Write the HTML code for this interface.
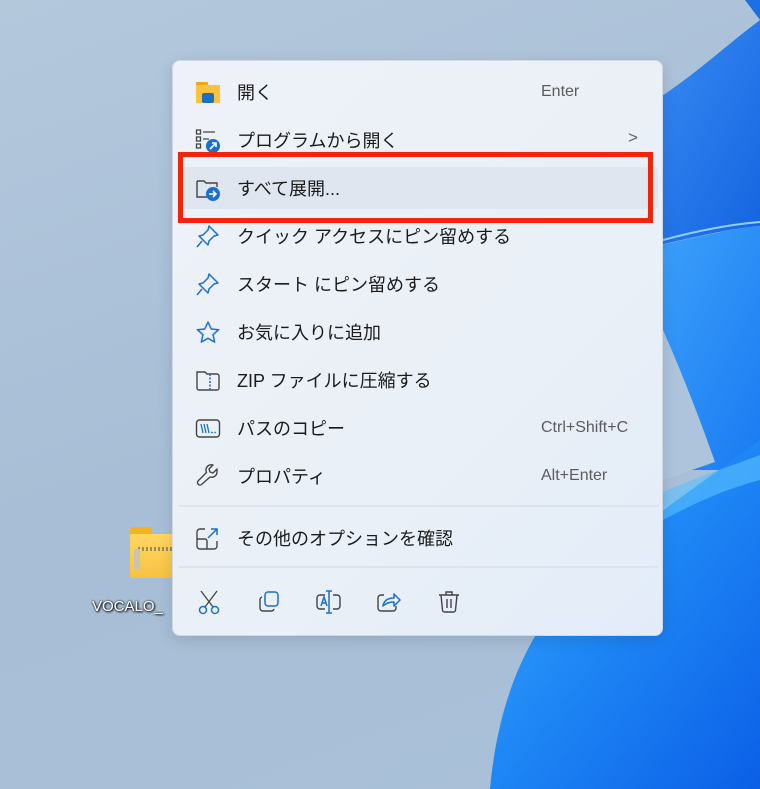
<!DOCTYPE html>
<html><head><meta charset="utf-8"><style>
*{margin:0;padding:0;box-sizing:border-box}
body{width:760px;height:789px;overflow:hidden;position:relative;background:linear-gradient(160deg,#b4c8dc 0%,#a7bed6 50%,#a9c0d8 100%);font-family:"Liberation Sans","Noto Sans CJK JP",sans-serif}
.menu{position:absolute;left:172px;top:60px;width:491px;height:576px;border-radius:8px;background:linear-gradient(135deg,#eef2f8 0%,#eaf0f7 60%,#e2ecf8 100%);border:1px solid #cfd9e6;box-shadow:0 4px 16px rgba(0,0,0,.12)}
.row{position:absolute;left:0;width:100%;height:40px;font-size:18px;color:#1b1b1b}
.row .t{position:absolute;left:64px;top:7px;white-space:nowrap}
.row .s{position:absolute;left:368px;top:11px;font-size:16px;color:#5c5c5c}
.row svg{position:absolute;left:22px;top:8px}
.hl{position:absolute;left:6px;top:106px;width:479px;height:42px;background:#dfe6ef;border-radius:4px}
.red{position:absolute;left:178px;top:152px;width:475px;height:71px;border:5px solid #f2240a}
.sep{position:absolute;left:6px;width:479px;height:2px;background:#dce3ec}
.bot svg{position:absolute;top:528px}
</style></head><body>
<svg width="760" height="789" style="position:absolute;left:0;top:0">
<defs>
<linearGradient id="g1" x1="0" y1="0" x2="1" y2="1"><stop offset="0" stop-color="#3b8ff5"/><stop offset="1" stop-color="#1463e0"/></linearGradient>
<linearGradient id="g2" x1="0" y1="0" x2="1" y2="1"><stop offset="0" stop-color="#3fa4fb"/><stop offset="1" stop-color="#1a7af2"/></linearGradient>
<linearGradient id="g3" x1="0" y1="0" x2="1" y2="1"><stop offset="0" stop-color="#3aaaff"/><stop offset="0.5" stop-color="#1e86f5"/><stop offset="1" stop-color="#0b5fe6"/></linearGradient>
</defs>
<path d="M745 0 L760 0 L760 20 Z" fill="#1f6fe4"/>
<path d="M760 20 C720 50 690 80 640 110 L640 250 C700 235 735 228 760 226 Z" fill="url(#g1)"/>
<path d="M640 250 C700 236 735 228 760 226 L760 470 L640 470 Z" fill="url(#g2)"/>
<path d="M663 330 C685 380 700 420 715 462 L663 480 Z" fill="#aec4dc"/>
<path d="M760 440 C720 470 660 510 600 560 C540 610 500 680 490 789 L760 789 Z" fill="url(#g3)"/>
<path d="M760 455 C720 470 690 480 663 492 L663 520 C700 500 730 488 760 480 Z" fill="#5cc2ff" opacity=".6"/>
<path d="M663 240 C700 230 735 224 760 222" stroke="#8fd0ff" stroke-width="2" fill="none"/>
</svg>
<div style="position:absolute;left:130px;top:527px;width:45px;height:52px">
<div style="position:absolute;left:0;top:0;width:22px;height:10px;background:#f2b320;border-radius:3px 3px 0 0"></div>
<div style="position:absolute;left:0;top:7px;width:45px;height:44px;background:linear-gradient(#ffd761,#f6c343);border-radius:2px"></div>
<div style="position:absolute;left:8px;top:20px;width:37px;height:4px;background:repeating-linear-gradient(90deg,#9a8a60 0 2px,transparent 2px 4px)"></div>
<div style="position:absolute;left:4px;top:22px;width:6px;height:20px;background:#c9c3b0"></div>
</div>
<div style="position:absolute;left:92px;top:598px;font-size:15px;color:#fff;text-shadow:0 0 2px #000,1px 1px 2px #000">VOCALO_</div>
<div class="menu">
<div class="hl"></div>
<div class="row" style="top:11px"><svg width="26" height="24"><rect x="1" y="2" width="12" height="6" rx="1" fill="#f0a818"/><rect x="1" y="5" width="24" height="18" fill="#fcc23a"/><rect x="7" y="13" width="12" height="10" rx="2" fill="#1b6fc8"/></svg><span class="t">開く</span><span class="s">Enter</span></div>
<div class="row" style="top:59px"><svg width="26" height="26"><g fill="none" stroke="#444" stroke-width="1.3"><rect x="1.5" y="2" width="4" height="4"/><rect x="1.5" y="9" width="4" height="4"/><rect x="1.5" y="16" width="4" height="4"/><path d="M8 4h12M8 11h6"/></g><circle cx="18" cy="18" r="7" fill="#1a6fd0"/><path d="M15 21l6-6M17 15h4v4" stroke="#fff" stroke-width="1.6" fill="none"/></svg><span class="t">プログラムから開く</span><span style="position:absolute;left:455px;top:8px;font-size:17px;color:#666">&gt;</span></div>
<div class="row" style="top:107px"><svg width="26" height="26"><path d="M2 5h7l2 2h11v4M2 5v16h10" fill="none" stroke="#444" stroke-width="1.4"/><circle cx="18" cy="18" r="7" fill="#1a6fd0"/><path d="M14 18h7M18 15l3 3-3 3" stroke="#fff" stroke-width="1.6" fill="none"/></svg><span class="t">すべて展開...</span></div>
<div class="row" style="top:155px"><svg width="26" height="26"><path d="M14 2l9 9-4 1-5 5-1 4-9-9 4-1 5-5zM7 17l-5 6" fill="none" stroke="#1a6fd0" stroke-width="1.5" stroke-linejoin="round"/></svg><span class="t">クイック アクセスにピン留めする</span></div>
<div class="row" style="top:203px"><svg width="26" height="26"><path d="M14 2l9 9-4 1-5 5-1 4-9-9 4-1 5-5zM7 17l-5 6" fill="none" stroke="#1a6fd0" stroke-width="1.5" stroke-linejoin="round"/></svg><span class="t">スタート にピン留めする</span></div>
<div class="row" style="top:251px"><svg width="26" height="26"><path d="M13 2l3.2 7 7.5.7-5.7 5 1.7 7.4L13 18.3 6.3 22.1 8 14.7 2.3 9.7 9.8 9z" fill="none" stroke="#1a6fd0" stroke-width="1.5" stroke-linejoin="round"/></svg><span class="t">お気に入りに追加</span></div>
<div class="row" style="top:299px"><svg width="26" height="26"><path d="M2 4h8l2 2h10a2 2 0 012 2v12a2 2 0 01-2 2H4a2 2 0 01-2-2z" fill="none" stroke="#444" stroke-width="1.4"/><path d="M15 6v16" stroke="#1a6fd0" stroke-width="1.6" stroke-dasharray="2 1.5"/></svg><span class="t">ZIP ファイルに圧縮する</span></div>
<div class="row" style="top:347px"><svg width="26" height="26"><rect x="1.5" y="4" width="23" height="17" rx="3" fill="none" stroke="#444" stroke-width="1.4"/><path d="M6 8l2 9M9 8l2 9M12 8l2 9" stroke="#1a6fd0" stroke-width="1.3"/><circle cx="17" cy="16.5" r=".9" fill="#1a6fd0"/><circle cx="20" cy="16.5" r=".9" fill="#1a6fd0"/></svg><span class="t">パスのコピー</span><span class="s">Ctrl+Shift+C</span></div>
<div class="row" style="top:395px"><svg width="26" height="26"><path d="M22 5l-4 4-3-1-1-3 4-4c-3-1-7 1-7 5 0 1 0 2 .5 2.5L3 17a2.5 2.5 0 003.5 3.5L15 13c3 1 7-1 7-5z" fill="none" stroke="#444" stroke-width="1.4" stroke-linejoin="round"/></svg><span class="t">プロパティ</span><span class="s">Alt+Enter</span></div>
<div class="sep" style="top:444px"></div>
<div class="row" style="top:457px"><svg width="26" height="26"><path d="M10 3H5a3 3 0 00-3 3v14a3 3 0 003 3h14a3 3 0 003-3v-5M2 13h8a2 2 0 012 2v8" fill="none" stroke="#444" stroke-width="1.4"/><path d="M13 12l9-9M16 3h6v6" fill="none" stroke="#1a6fd0" stroke-width="1.5"/></svg><span class="t">その他のオプションを確認</span></div>
<div class="sep" style="top:505px"></div>
<div class="bot">
<svg style="left:24px" width="24" height="26"><path d="M4 2l12 16M20 2L8 18" stroke="#444" stroke-width="1.3"/><circle cx="6" cy="21" r="3.5" fill="none" stroke="#1a6fd0" stroke-width="1.5"/><circle cx="18" cy="21" r="3.5" fill="none" stroke="#1a6fd0" stroke-width="1.5"/></svg>
<svg style="left:84px" width="24" height="26"><rect x="8" y="3" width="13" height="14" rx="3" fill="none" stroke="#1a6fd0" stroke-width="1.5"/><path d="M5 8a3 3 0 00-2 3v8a3 3 0 003 3h8a3 3 0 003-2" fill="none" stroke="#444" stroke-width="1.4"/></svg>
<svg style="left:142px" width="28" height="26"><path d="M10 6H5a3 3 0 00-3 3v8a3 3 0 003 3h5M18 6h4a3 3 0 013 3v8a3 3 0 01-3 3h-4" fill="none" stroke="#444" stroke-width="1.4"/><path d="M14 2v22M11 2h6M11 24h6M6 17l3-9 3 9M7 14h4" fill="none" stroke="#1a6fd0" stroke-width="1.5"/></svg>
<svg style="left:203px" width="26" height="26"><path d="M8 6H5a3 3 0 00-3 3v10a3 3 0 003 3h12a3 3 0 003-3v-2" fill="none" stroke="#444" stroke-width="1.4"/><path d="M7 17c1-6 5-8 11-8V5l6 6-6 6v-4c-5 0-8 1-11 4z" fill="none" stroke="#1a6fd0" stroke-width="1.5" stroke-linejoin="round"/></svg>
<svg style="left:264px" width="24" height="26"><path d="M2 6h20M9 6V3h6v3M4 6l1.5 15a2 2 0 002 2h9a2 2 0 002-2L20 6M10 10v9M14 10v9" fill="none" stroke="#444" stroke-width="1.4"/></svg>
</div>
</div>
<div class="red"></div>
</body></html>
